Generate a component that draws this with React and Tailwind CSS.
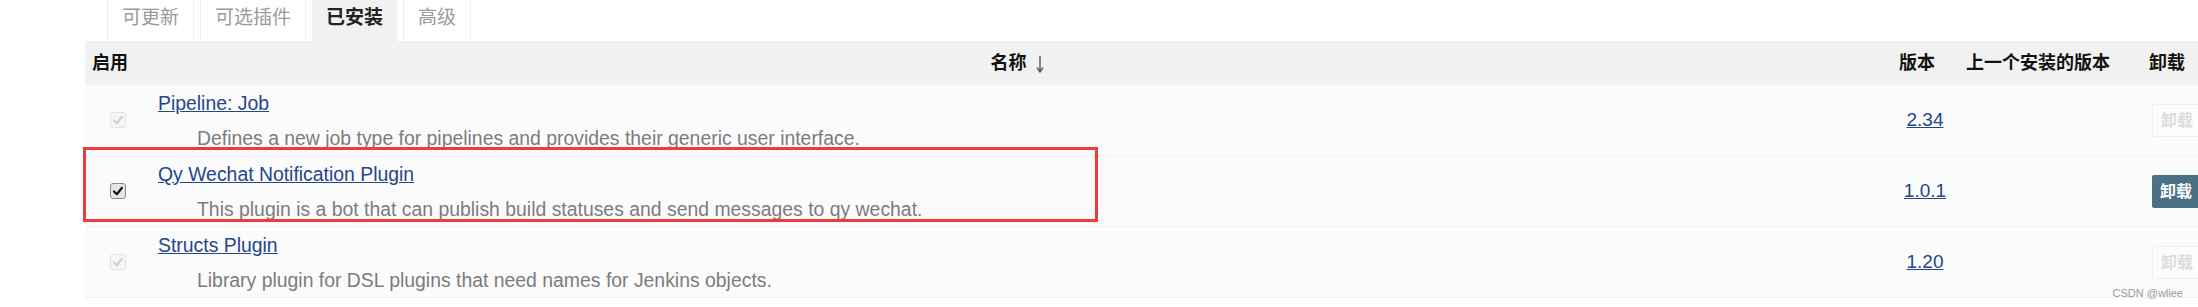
import React from 'react'

const font = { fontFamily: '"Liberation Sans", "Noto Sans CJK SC", Arial, sans-serif' }

const tabs = [
  { label: '可更新' },
  { label: '可选插件' },
  { label: '已安装', active: true },
  { label: '高级' },
]

const plugins = [
  {
    name: 'Pipeline: Job',
    desc: 'Defines a new job type for pipelines and provides their generic user interface.',
    version: '2.34',
    enabled: false,
  },
  {
    name: 'Qy Wechat Notification Plugin',
    desc: 'This plugin is a bot that can publish build statuses and send messages to qy wechat.',
    version: '1.0.1',
    enabled: true,
  },
  {
    name: 'Structs Plugin',
    desc: 'Library plugin for DSL plugins that need names for Jenkins objects.',
    version: '1.20',
    enabled: false,
  },
]

const CheckBox = ({ active }) => (
  <span
    className={
      active
        ? 'flex items-center justify-center w-[16px] h-[16px] rounded-[3px] border border-[#8a8a8a] bg-[#e6e6e6]'
        : 'flex items-center justify-center w-[16px] h-[16px] rounded-[3px] border border-[#e2e2e2] bg-[#f6f6f6]'
    }
  >
    <svg width="12" height="12" viewBox="0 0 12 12">
      <path
        d="M2 6.5 L4.8 9.2 L10 2.8"
        fill="none"
        stroke={active ? '#111' : '#d0d0d0'}
        strokeWidth="2.2"
        strokeLinecap="round"
        strokeLinejoin="round"
      />
    </svg>
  </span>
)

// thin sort arrow next to the name header
const SortArrow = () => (
  <svg width="10" height="20" viewBox="0 0 10 20" className="inline-block ml-[8px] align-[-5px]">
    <path d="M5 2 V17" stroke="#555" strokeWidth="1.4" fill="none" />
    <path d="M2 13.5 L5 18 L8 13.5" stroke="#555" strokeWidth="1.4" fill="none" strokeLinejoin="round" />
  </svg>
)

const cols = 'grid grid-cols-[60px_1745px_70px_180px_70px]'

export default function App() {
  return (
    <div className="relative w-[2198px] h-[307px] overflow-hidden bg-white" style={font}>
      {/* tabs */}
      <div className="flex ml-[107px] gap-[6px] h-[41px]">
        {tabs.map((t) => (
          <div
            key={t.label}
            className={
              t.active
                ? 'px-[14px] h-[41px] leading-[36px] text-[19px] font-bold text-[#222] bg-[#f1f1f1]'
                : 'px-[14px] h-[41px] leading-[36px] text-[19px] text-[#9a9a9a] border-x border-[#f0f0f0]'
            }
          >
            {t.label}
          </div>
        ))}
      </div>

      <div className="ml-[85px]">
        {/* header */}
        <div className={`${cols} h-[44px] items-center bg-[#f1f1f1] text-[18px] font-bold text-[#111]`}>
          <div className="pl-[7px]">启用</div>
          <div className="text-center">
            名称<SortArrow />
          </div>
          <div className="pl-[9px]">版本</div>
          <div className="pl-[6px]">上一个安装的版本</div>
          <div className="pl-[9px]">卸载</div>
        </div>

        {plugins.map((p) => (
          <div key={p.name} className={`${cols} h-[71px] items-center bg-[#fbfbfb] border-b border-[#f1f1f1]`}>
            <div className="pl-[25px]">
              <CheckBox active={p.enabled} />
            </div>
            <div className="pl-[13px] pt-[1px]">
              <a href="#" className="block leading-[24px] text-[19.4px] text-[#24468a] underline">
                {p.name}
              </a>
              <div className="mt-[11px] pl-[39px] leading-[24px] text-[19.4px] text-[#7c7c7c]">
                {p.desc}
              </div>
            </div>
            <div className="text-center">
              <a href="#" className="text-[19px] text-[#24468a] underline">
                {p.version}
              </a>
            </div>
            <div></div>
            <div className="pl-[12px]">
              {p.enabled ? (
                <span className="inline-block px-[8px] leading-[33px] text-[16px] font-bold text-white bg-[#4a7184] rounded-[2px]">
                  卸载
                </span>
              ) : (
                <span className="inline-block px-[8px] leading-[31px] text-[16px] font-bold text-[#dcdcdc] bg-[#fdfdfd] border border-[#efefef] rounded-[2px]">
                  卸载
                </span>
              )}
            </div>
          </div>
        ))}
      </div>

      {/* annotation box */}
      <div className="absolute left-[83px] top-[147px] w-[1015px] h-[75px] border-[3px] border-[#f33a3a]"></div>

      {/* watermark */}
      <div className="absolute right-[15px] bottom-[6px] text-[11px] text-[#9a9a9a]">CSDN @wliee</div>
    </div>
  )
}
